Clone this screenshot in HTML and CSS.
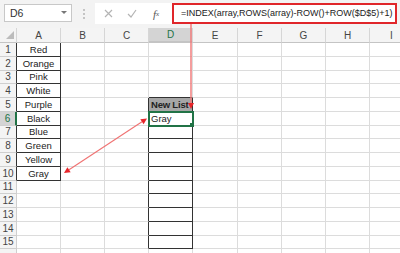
FILE: index.html
```html
<!DOCTYPE html>
<html lang="en">
<head>
    <meta charset="UTF-8">
    <meta name="viewport" content="width=device-width, initial-scale=1.0">
    <title>Reverse List</title>
    <link rel="stylesheet" href="styles.css">
</head>
<body>
    <div class="toolbar">
        <div class="name-box">
            <span>D6</span>
            <svg class="caret" width="6" height="4" viewBox="0 0 6 4"><polygon points="0,0 6,0 3,3" fill="#777"/></svg>
        </div>
        <div class="grip"><span></span><span></span><span></span></div>
        <div class="fx-buttons">
            <span class="btn">
                <svg width="9" height="9" viewBox="0 0 9 9"><path d="M1 1 L8 8 M8 1 L1 8" stroke="#b4b4b4" stroke-width="1.2" fill="none"/></svg>
            </span>
            <span class="btn">
                <svg width="10" height="9" viewBox="0 0 10 9"><path d="M1 5 L4 8 L9 1" stroke="#b4b4b4" stroke-width="1.2" fill="none"/></svg>
            </span>
            <span class="btn fx">f<sub>x</sub></span>
        </div>
        <div class="formula">=INDEX(array,ROWS(array)-ROW()+ROW($D$5)+1)</div>
    </div>

    <table class="sheet">
        <colgroup>
            <col class="col-rh">
            <col class="col"><col class="col"><col class="col"><col class="col">
            <col class="col-e">
            <col class="col"><col class="col"><col class="col"><col class="col">
        </colgroup>
        <tr class="head">
            <th class="corner"><svg width="8" height="8" viewBox="0 0 8 8"><polygon points="8,0 8,8 0,8" fill="#bcbcbc"/></svg></th>
            <th class="hb">A</th><th>B</th><th>C</th><th class="active-col">D</th><th>E</th><th>F</th><th>G</th><th>H</th><th>I</th>
        </tr>
        <tr><th class="rb">1</th><td class="b">Red</td><td></td><td></td><td></td><td></td><td></td><td></td><td></td><td></td></tr>
        <tr><th class="rb">2</th><td class="b">Orange</td><td></td><td></td><td></td><td></td><td></td><td></td><td></td><td></td></tr>
        <tr><th class="rb">3</th><td class="b">Pink</td><td></td><td></td><td></td><td></td><td></td><td></td><td></td><td></td></tr>
        <tr><th class="rb">4</th><td class="b">White</td><td></td><td></td><td class="bb"></td><td></td><td></td><td></td><td></td><td></td></tr>
        <tr><th class="rb">5</th><td class="b">Purple</td><td></td><td class="rb"></td><td class="b list-head">New List</td><td></td><td></td><td></td><td></td><td></td></tr>
        <tr><th class="rb active-row">6</th><td class="b">Black</td><td></td><td class="rb"></td><td class="b list selected">Gray</td><td></td><td></td><td></td><td></td><td></td></tr>
        <tr><th class="rb">7</th><td class="b">Blue</td><td></td><td class="rb"></td><td class="b"></td><td></td><td></td><td></td><td></td><td></td></tr>
        <tr><th class="rb">8</th><td class="b">Green</td><td></td><td class="rb"></td><td class="b"></td><td></td><td></td><td></td><td></td><td></td></tr>
        <tr><th class="rb">9</th><td class="b">Yellow</td><td></td><td class="rb"></td><td class="b"></td><td></td><td></td><td></td><td></td><td></td></tr>
        <tr><th class="rb">10</th><td class="b">Gray</td><td></td><td class="rb"></td><td class="b"></td><td></td><td></td><td></td><td></td><td></td></tr>
        <tr><th>11</th><td></td><td></td><td class="rb"></td><td class="b"></td><td></td><td></td><td></td><td></td><td></td></tr>
        <tr><th>12</th><td></td><td></td><td class="rb"></td><td class="b"></td><td></td><td></td><td></td><td></td><td></td></tr>
        <tr><th>13</th><td></td><td></td><td class="rb"></td><td class="b"></td><td></td><td></td><td></td><td></td><td></td></tr>
        <tr><th>14</th><td></td><td></td><td class="rb"></td><td class="b"></td><td></td><td></td><td></td><td></td><td></td></tr>
        <tr><th>15</th><td></td><td></td><td class="rb"></td><td class="b"></td><td></td><td></td><td></td><td></td><td></td></tr>
        <tr><th></th><td></td><td></td><td></td><td></td><td></td><td></td><td></td><td></td><td></td></tr>
    </table>

    <!-- callout arrows drawn over the sheet -->
    <svg class="arrows" width="400" height="253" viewBox="0 0 400 253">
        <line x1="191" y1="24" x2="191" y2="104" stroke="#f07c7c" stroke-width="1.5"/>
        <polygon points="191,109 188,103 194,103" fill="#e8262b"/>
        <line x1="142" y1="121.8" x2="69" y2="169.7" stroke="#f07272" stroke-width="1.1"/>
        <polygon points="147,118.5 143.6,124.3 140.3,119.3" fill="#e8262b"/>
        <polygon points="64,173 70.7,172.2 67.4,167.2" fill="#e8262b"/>
    </svg>
</body>
</html>
```

FILE: styles.css
```css
body {
    margin: 0;
    width: 400px;
    height: 253px;
    overflow: hidden;
    position: relative;
    background: #fff;
    font-family: "Liberation Sans", Arial, sans-serif;
}

/* formula bar */
.toolbar {
    display: flex;
    align-items: flex-start;
    height: 28px;
    padding: 3px 0 0 4px;
    box-sizing: border-box;
    background: #f3f3f3;
}
.name-box {
    width: 68px;
    height: 18px;
    margin-top: 1px;
    box-sizing: border-box;
    border: 1px solid #c8c8c8;
    background: #fff;
    display: flex;
    align-items: center;
    justify-content: space-between;
    padding: 0 4px 0 5px;
    font-size: 10.5px;
    color: #333;
}
.grip {
    display: flex;
    flex-direction: column;
    gap: 2px;
    margin: 6px 10px 0 11px;
}
.grip span {
    width: 2px;
    height: 2px;
    background: #c4c4c4;
}
.fx-buttons {
    display: flex;
    align-items: center;
    width: 77px;
    height: 21px;
    padding-left: 1px;
    box-sizing: border-box;
    background: #fff;
}
.btn {
    width: 24px;
    display: flex;
    justify-content: center;
    align-items: center;
}
.fx {
    font-family: "Liberation Serif", serif;
    font-style: italic;
    font-size: 11px;
    color: #555;
}
.fx sub {
    font-size: 7px;
}
.formula {
    width: 225px;
    height: 21px;
    box-sizing: border-box;
    border: 2px solid #e0262a;
    background: #fff;
    padding-left: 7px;
    font-size: 9px;
    line-height: 17px;
    color: #222;
    white-space: nowrap;
}

/* worksheet grid */
.sheet {
    border-collapse: separate;
    border-spacing: 0;
    table-layout: fixed;
    width: 414px;
    font-size: 9.5px;
    color: #222;
}
.col-rh { width: 17px; }
.col { width: 44px; }
.col-e { width: 45px; }
.sheet tr { height: 13.75px; }
.sheet tr.head { height: 15px; }
.sheet td, .sheet th {
    padding: 0;
    line-height: 11px;
    border-right: 1px solid #dcdcdc;
    border-bottom: 1px solid #dcdcdc;
    overflow: hidden;
    white-space: nowrap;
}
.sheet th {
    background: #f4f4f4;
    font-weight: normal;
    color: #444;
    font-size: 10px;
    border-color: #cfcfcf;
}
.sheet .head th {
    text-align: center;
    border-right-color: #d6d6d6;
    border-bottom-color: #c4c4c4;
}
.corner {
    text-align: right !important;
    vertical-align: bottom;
}
.corner svg {
    display: block;
    margin: 0 2px 3px auto;
}
.sheet td { text-align: center; }
.sheet td.list, .sheet td.list-head {
    text-align: left;
    padding-left: 2px;
}
.sheet td.list-head {
    background: #a6a6a6;
    font-weight: bold;
    letter-spacing: -0.2px;
    overflow: visible;
}

/* hand-drawn borders */
.sheet .b {
    border-right-color: #333;
    border-bottom-color: #333;
}
.sheet .rb { border-right-color: #333; }
.sheet .bb { border-bottom-color: #333; }
.sheet .hb { border-bottom-color: #555; }

/* active cell */
.sheet .active-col {
    background: #d4d4d4;
    color: #217346;
    border-bottom: 2px solid #217346;
}
.sheet .active-row {
    background: #d4d4d4;
    color: #217346;
    border-right: 2px solid #217346;
}
.selected {
    position: relative;
    outline: 2px solid #217346;
    outline-offset: -1px;
}
.selected::after {
    content: "";
    position: absolute;
    right: -3px;
    bottom: -3px;
    width: 4px;
    height: 4px;
    background: #217346;
    border: 1px solid #fff;
}

.arrows {
    position: absolute;
    top: 0;
    left: 0;
    pointer-events: none;
}
```
